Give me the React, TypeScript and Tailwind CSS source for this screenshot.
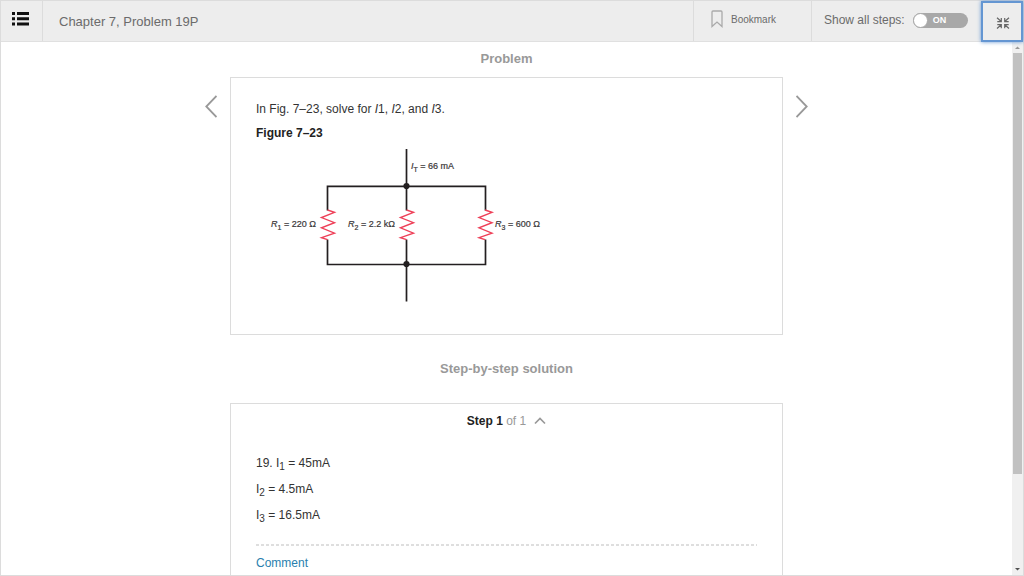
import { useState } from "react";
import type { ReactNode } from "react";

const zigzag = (x: number) =>
  `M${x} 70 L${x + 7} 72.3 L${x - 6} 77.6 L${x + 7} 82.7 L${x - 6} 87.8 L${x + 7} 93.2 L${x - 6} 97.7 L${x} 99.7`;

function Circuit() {
  return (
    <svg
      className="block w-[310px] h-[170px] font-[Liberation_Sans,Arial,sans-serif]"
      viewBox="0 0 310 170"
      role="img"
      aria-label="Three resistors in parallel"
    >
      <g fill="none" stroke="#231f20" strokeWidth="1.7">
        <path d="M156.500 9 V70.500 M156.500 99.500 V161.500" />
        <path d="M77.500 70.500 V46.300 H235.500 V70.500" />
        <path d="M77.500 99.500 V124.500 H235.500 V99.500" />
      </g>
      <circle cx="156.500" cy="46" r="3.100" fill="#231f20" />
      <circle cx="156.500" cy="124" r="3.100" fill="#231f20" />
      <g fill="none" stroke="#ee4058" strokeWidth="1.4">
        <path d={zigzag(77.5)} />
        <path d={zigzag(156.5)} />
        <path d={zigzag(235)} />
      </g>
      <g fill="#3a3738" stroke="#3a3738" strokeWidth="0.2" fontSize="9">
        <text x="161" y="29">
          <tspan fontStyle="italic">I</tspan>
          <tspan fontSize="7" dy="3">T</tspan>
          <tspan dy="-3"> = 66 mA</tspan>
        </text>
        <text x="21" y="87">
          <tspan fontStyle="italic">R</tspan>
          <tspan fontSize="7" dy="3">1</tspan>
          <tspan dy="-3"> = 220 Ω</tspan>
        </text>
        <text x="98" y="87">
          <tspan fontStyle="italic">R</tspan>
          <tspan fontSize="7" dy="3">2</tspan>
          <tspan dy="-3"> = 2.2 kΩ</tspan>
        </text>
        <text x="245" y="87">
          <tspan fontStyle="italic">R</tspan>
          <tspan fontSize="7" dy="3">3</tspan>
          <tspan dy="-3"> = 600 Ω</tspan>
        </text>
      </g>
    </svg>
  );
}

function Header() {
  const [showAll, setShowAll] = useState(true);
  return (
    <header className="flex h-[41px] shrink-0 items-stretch border-b border-[#e0e0e0] bg-[#ededed] text-[#6b6b6b]">
      <button type="button" aria-label="Table of contents" className="flex w-[42px] border-r border-[#dcdcdc] pl-[11px] pt-[11px]">
        <svg className="h-[14px] w-[18px]" viewBox="0 0 18 14" fill="#111">
          <path d="M0 0h3v3H0zM5 0h12v3H5zM0 5.300h3v3H0zM5 5.300h12v3H5zM0 10.600h3v3H0zM5 10.600h12v3H5z" />
        </svg>
      </button>
      <h1 className="flex flex-1 items-center pl-4 pt-0.5 text-[13px]">Chapter 7, Problem 19P</h1>
      <button type="button" className="flex w-[119px] items-center gap-2 border-x border-[#dcdcdc] pb-1 pl-[17px] text-[10px]">
        <svg className="h-[18px] w-3" viewBox="0 0 12 18" fill="none" stroke="#aaa" strokeWidth="1.3">
          <path d="M2 1H10Q11 1 11 2V16.500L6 12L1 16.500V2Q1 1 2 1Z" />
        </svg>
        Bookmark
      </button>
      <div className="flex w-[169px] items-center gap-2 pb-px pl-3">
        <label htmlFor="show-all" className="pb-0.5 text-[12px]">Show all steps:</label>
        <span className="relative flex">
          <input
            id="show-all"
            type="checkbox"
            role="switch"
            checked={showAll}
            onChange={(e) => setShowAll(e.target.checked)}
            className="h-[15px] w-[55px] appearance-none rounded-full bg-[#a8a8a8] before:block before:size-[15px] before:rounded-full before:border before:border-[#a8a8a8] before:bg-white"
          />
          <span className="pointer-events-none absolute left-5 top-0 text-[9px] font-bold leading-[15px] text-white">
            {showAll ? "ON" : "OFF"}
          </span>
        </span>
      </div>
      <button
        type="button"
        aria-label="Exit full screen"
        className="z-10 -mb-px flex w-[42px] items-center justify-center border-2 border-[#6496d2] pl-0.5 pt-0.5 shadow-[0_0_4px_#6496d2]"
      >
        <svg className="h-3 w-[14px]" viewBox="0 0 14 12" fill="none" stroke="#666" strokeWidth="1.2">
          <path d="M1 0.800L5 4.300M1.300 4.600H5.300V1M13 0.800L9 4.300M12.700 4.600H8.700V1M1 11.500L5 8M1.300 7.600H5.300V11.200M13 11.500L9 8M12.700 7.600H8.700V11.200" />
        </svg>
      </button>
    </header>
  );
}

function Arrow({ label, d }: { label: string; d: string }) {
  return (
    <button type="button" aria-label={label} className="mt-[18px] self-start">
      <svg className="h-[23px] w-3" viewBox="0 0 12 23" fill="none" stroke="#999" strokeWidth="1.800">
        <path d={d} />
      </svg>
    </button>
  );
}

function Heading({ children }: { children: ReactNode }) {
  return <h2 className="text-center text-[13px] font-bold leading-4 text-[#999]">{children}</h2>;
}

function Sub({ children }: { children: ReactNode }) {
  return <sub className="text-[10px]">{children}</sub>;
}

function Scrollbar() {
  return (
    <div aria-hidden="true" className="flex w-[11px] shrink-0 flex-col bg-[#f0f0f0]">
      <svg className="h-[11px] w-full" viewBox="0 0 11 11" fill="#999">
        <path d="M5.500 4.500L8 7H3Z" />
      </svg>
      <div className="mx-px h-[79%] bg-[#c1c1c1]" />
      <svg className="mt-auto h-[11px] w-full" viewBox="0 0 11 11" fill="#505050">
        <path d="M5.500 6.500L8 4H3Z" />
      </svg>
    </div>
  );
}

export default function App() {
  return (
    <div className="flex h-screen flex-col border border-[#dcdcdc] bg-white font-[Liberation_Sans,Arial,sans-serif] text-[12px] text-[#333]">
      <Header />
      <div className="flex min-h-0 flex-1">
        <main className="flex-1 overflow-hidden pt-[9px]">
          <Heading>Problem</Heading>
          <div className="mt-[10px] flex justify-center gap-[13px]">
            <Arrow label="Previous problem" d="M11.500 1L1.300 11.500L11.500 22" />
            <section className="w-full max-w-[553px] border border-[#dcdcdc] px-[25px] pb-6 pt-[19px]">
              <p className="leading-6">
                In Fig. 7–23, solve for <i>I</i>1, <i>I</i>2, and <i>I</i>3.
              </p>
              <p className="font-bold leading-6 text-[#222]">Figure 7–23</p>
              <div className="-ml-1.5 -mt-[5px]">
                <Circuit />
              </div>
            </section>
            <Arrow label="Next problem" d="M0.500 1L10.700 11.500L0.500 22" />
          </div>
          <div className="mt-[26px]">
            <Heading>Step-by-step solution</Heading>
          </div>
          <section className="mx-auto mt-[26px] w-full max-w-[553px] border border-[#dcdcdc] px-[25px] pb-8 pt-2">
            <button type="button" className="mx-auto flex items-center gap-2 leading-[18px] text-[#999]">
              <span>
                <b className="text-[#222]">Step 1</b> of 1
              </span>
              <svg className="h-2 w-3" viewBox="0 0 12 8" fill="none" stroke="#999" strokeWidth="1.700">
                <path d="M1 6.500L6 1.500L11 6.500" />
              </svg>
            </button>
            <div className="mt-5 leading-[26px]">
              <p>19. I<Sub>1</Sub> = 45mA</p>
              <p>I<Sub>2</Sub> = 4.5mA</p>
              <p>I<Sub>3</Sub> = 16.5mA</p>
            </div>
            <div className="mt-4 h-0.5 bg-[repeating-linear-gradient(90deg,#dedede_0_3px,transparent_3px_5px)]" />
            <a href="#comment" className="mt-2 block w-fit leading-[18px] text-[#2a7fae]">Comment</a>
          </section>
        </main>
        <Scrollbar />
      </div>
    </div>
  );
}
